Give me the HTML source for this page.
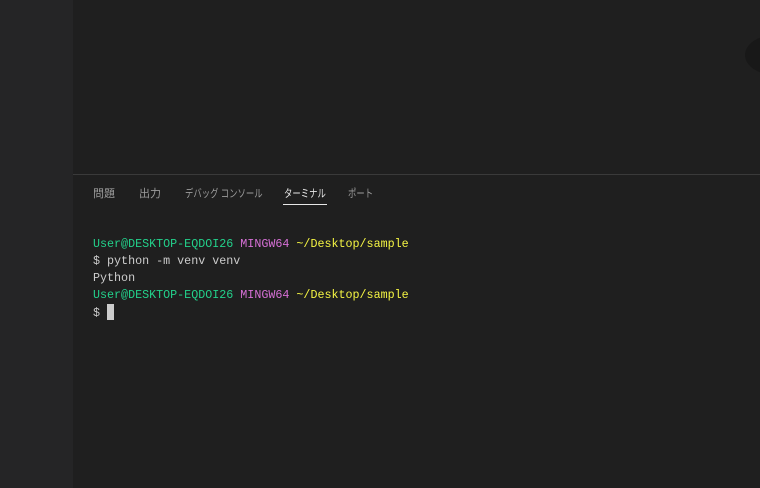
<!DOCTYPE html>
<html><head><meta charset="utf-8"><style>
body{margin:0;width:760px;height:488px;background:#1f1f1f;position:relative;overflow:hidden;font-family:"Liberation Sans","Noto Sans CJK JP",sans-serif}
#side{position:absolute;left:0;top:0;width:73px;height:488px;background:#252526}
#line{position:absolute;left:73px;right:0;top:174px;height:1px;background:#3a3a3a}
.tab{position:absolute;top:185px;font-size:11px;color:#9d9d9d;white-space:nowrap;transform-origin:left center}
.k{transform:scaleX(0.76)}
.act{color:#e7e7e7}
#ul{position:absolute;left:283px;top:204px;width:44px;height:1px;background:#e7e7e7}
#term{position:absolute;left:93px;top:236px;font-family:"Liberation Mono",monospace;font-size:11.7px;line-height:17px;color:#cccccc;white-space:pre}
.g{color:#23d18b}.m{color:#d670d6}.y{color:#f5f543}
#cur{display:inline-block;width:7px;height:16px;background:#cccccc;vertical-align:-4px}
#blob{position:absolute;left:745px;top:35px;width:60px;height:40px;border-radius:50%;background:#181818}
</style></head><body>
<div id="side"></div>
<div id="blob"></div>
<div id="line"></div>
<div class="tab" style="left:93px">問題</div>
<div class="tab" style="left:139px">出力</div>
<div class="tab k" style="left:185px">デバッグ コンソール</div>
<div class="tab k act" style="left:284px">ターミナル</div>
<div class="tab k" style="left:348px">ポート</div>
<div id="ul"></div>
<div id="term"><span class="g">User@DESKTOP-EQDOI26</span> <span class="m">MINGW64</span> <span class="y">~/Desktop/sample</span>
$ python -m venv venv
Python
<span class="g">User@DESKTOP-EQDOI26</span> <span class="m">MINGW64</span> <span class="y">~/Desktop/sample</span>
$ <span id="cur"></span></div>
</body></html>
